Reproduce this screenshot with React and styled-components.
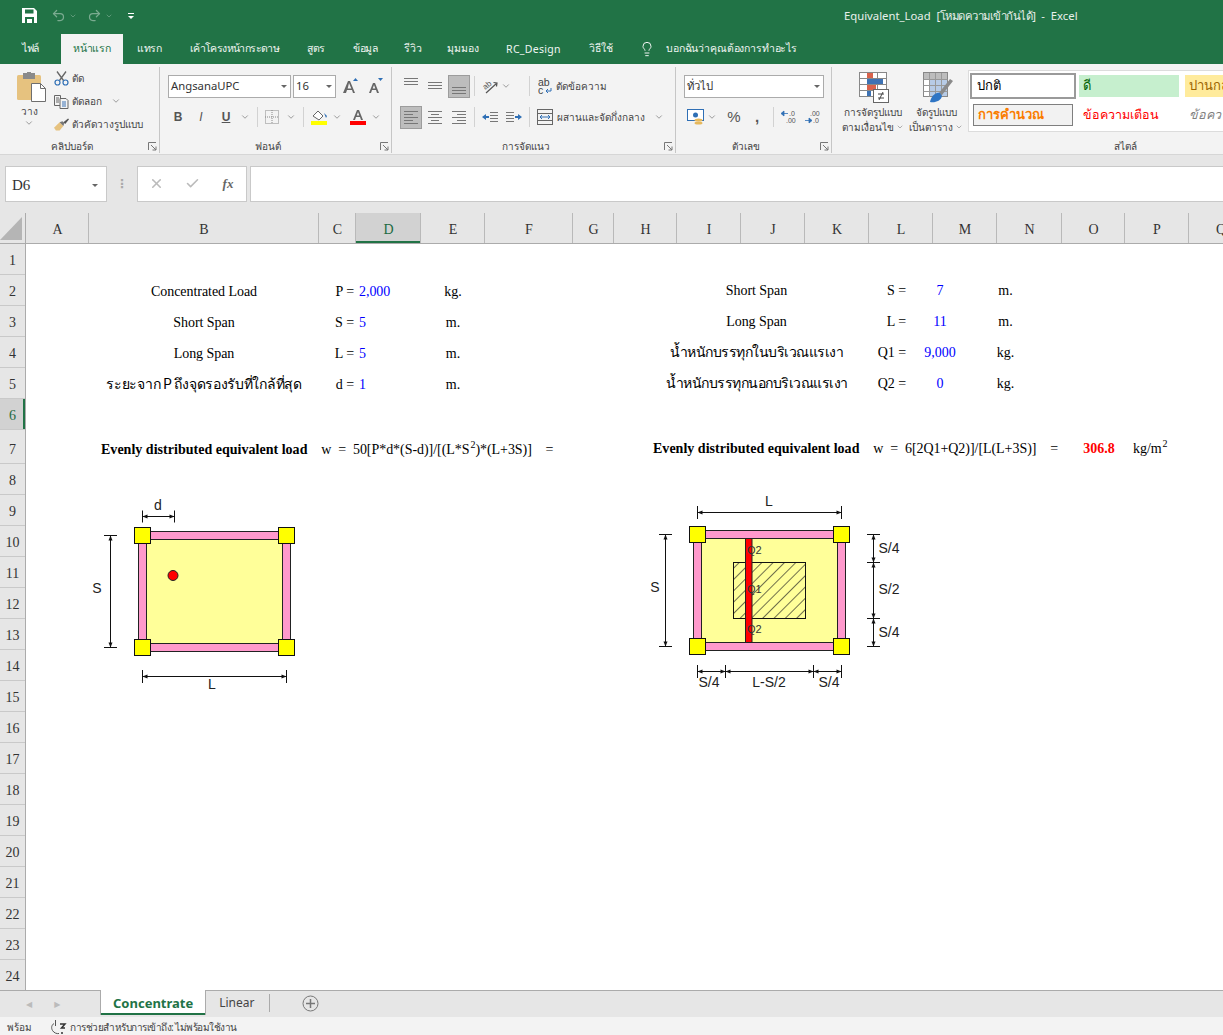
import React from "react";
import styled, { createGlobalStyle } from "styled-components";
import { Undo2, Redo2, Lightbulb, ChevronDown, X, Check } from "lucide-react";

const THAI = `"Noto Sans CJK SC", "Noto Sans", "Liberation Sans", "DejaVu Sans", sans-serif`;
const UI = `"Noto Sans", "Liberation Sans", "DejaVu Sans", sans-serif`;
const SERIF = `"Liberation Serif", "DejaVu Serif", serif`;

const GlobalStyle = createGlobalStyle`
  html, body {
    margin: 0;
    padding: 0;
    background: #fff;
  }
  * { box-sizing: border-box; }
`;

const Page = styled.div`
  width: 1223px;
  height: 1035px;
  overflow: hidden;
  display: flex;
  flex-direction: column;
  font-family: ${UI};
  color: #444;
`;

/* title + tabs */
const TitleBar = styled.div`
  height: 34px;
  background: #217346;
  display: flex;
  align-items: center;
  color: #fff;
  padding: 0 0 2px 22px;
`;

const QuickIcons = styled.div`
  display: flex;
  align-items: center;
  width: 822px;
`;

const QuickBtn = styled.span`
  display: inline-flex;
  align-items: center;
  margin-right: ${({ $gap }) => $gap || 0}px;
  opacity: ${({ $dim }) => ($dim ? 0.4 : 1)};
`;

const TitleText = styled.div`
  font-size: 11.3px;
  white-space: pre;
  color: #e8f0eb;
`;

const TitleThai = styled.span`
  letter-spacing: -0.5px;
`;

const TabBar = styled.div`
  height: 30px;
  background: #217346;
  display: flex;
  align-items: stretch;
`;

const TabItem = styled.div`
  width: ${({ $w }) => ($w ? `${$w}px` : "auto")};
  flex: none;
  display: flex;
  align-items: center;
  justify-content: center;
  font-size: 10.5px;
  letter-spacing: ${({ $ls }) => $ls ?? -0.15}px;
  white-space: nowrap;
  color: ${({ $on }) => ($on ? "#217346" : "#f0f5f2")};
  background: ${({ $on }) => ($on ? "#f3f3f3" : "transparent")};
`;

const Ribbon = styled.div`
  height: 91px;
  background: #f3f3f3;
  display: flex;
  border-bottom: 1px solid #d6d6d6;
`;

const Group = styled.div`
  width: ${({ $w }) => $w}px;
  flex: none;
  position: relative;
  height: 86px;
  margin-top: 3px;
  display: flex;
  flex-direction: column;
  border-right: 1px solid #c6c6c6;
  &:last-child { border-right: 0; }
`;

const GroupBody = styled.div`
  flex: 1;
  display: flex;
  flex-direction: ${({ $row }) => ($row ? "row" : "column")};
  padding: ${({ $pad }) => $pad || "8px 0 0 8px"};
  min-height: 0;
`;

const GroupLabel = styled.div`
  height: 14px;
  flex: none;
  padding: ${({ $pad }) => $pad || "0 16px 0 0"};
  text-align: center;
  font-size: 10px;
  line-height: 14px;
  color: #444;
`;

const Launcher = styled.svg`
  position: absolute;
  right: 2px;
  bottom: 2px;
`;

const ToolRow = styled.div`
  display: flex;
  align-items: center;
  height: ${({ $h }) => $h || 23}px;
  margin-top: ${({ $mt }) => $mt || 0}px;
  font-size: 10px;
  line-height: 14px;
  color: #444;
  white-space: nowrap;
`;

const IconBtn = styled.div`
  width: ${({ $w }) => $w}px;
  height: 23px;
  flex: none;
  display: flex;
  align-items: center;
  justify-content: center;
  margin-left: ${({ $ml }) => $ml || 0}px;
  background: ${({ $on }) => ($on ? "#bdbdbd" : "transparent")};
  border: ${({ $on }) => ($on ? "1px solid #9c9c9c" : "0")};
`;

const RowLabel = styled.span`
  margin-left: ${({ $ml }) => $ml || 0}px;
`;

const Combo = styled.div`
  width: ${({ $w }) => $w}px;
  height: 23px;
  flex: none;
  margin-right: ${({ $mr }) => $mr || 0}px;
  background: #fff;
  border: 1px solid #ababab;
  display: flex;
  align-items: center;
  padding: 0 3px 0 2px;
  font-size: 11.3px;
  color: #333;
  justify-content: space-between;
`;

const Caret = styled.span`
  width: 0;
  height: 0;
  border-left: 3px solid transparent;
  border-right: 3px solid transparent;
  border-top: 3px solid #666;
`;

const Sep = styled.div`
  width: 1px;
  height: 20px;
  flex: none;
  margin-left: ${({ $ml }) => $ml || 0}px;
  margin-right: ${({ $mr }) => $mr || 0}px;
  background: #d2d2d2;
`;

const FontBtn = styled.span`
  font-family: "Liberation Sans", sans-serif;
  font-size: ${({ $fs }) => $fs || 12}px;
  font-weight: ${({ $b }) => ($b ? 700 : 400)};
  font-style: ${({ $i }) => ($i ? "italic" : "normal")};
  text-decoration: ${({ $u }) => ($u ? "underline" : "none")};
  color: #555;
`;

const PasteColumn = styled.div`
  width: 54px;
  flex: none;
  padding: 5px 0 0 4px;
  display: flex;
  flex-direction: column;
  align-items: center;
  font-size: 10px;
  line-height: 14px;
  color: #444;
`;

const Glyph = styled.div`
  display: flex;
  margin-left: ${({ $ml }) => $ml || 0}px;
`;

const PasteLabel = styled.div`
  margin-top: 2px;
`;

const ClipStack = styled.div`
  display: flex;
  flex-direction: column;
`;

const StyleCommand = styled.div`
  width: ${({ $w }) => $w}px;
  flex: none;
  padding-top: 5px;
  display: flex;
  flex-direction: column;
  align-items: center;
  font-size: 10px;
  line-height: 15px;
  color: #444;
  white-space: nowrap;
`;

const CommandText = styled.div`
  margin-top: ${({ $mt }) => $mt || 0}px;
  display: flex;
  align-items: center;
  gap: 2px;
`;

const StyleGallery = styled.div`
  flex: 1;
  margin: 3px 0 0 2px;
  height: 62px;
  background: #fff;
  border: 1px solid #dcdcdc;
  border-right: 0;
  overflow: hidden;
  display: grid;
  grid-template-columns: 108px 106px 106px;
  grid-template-rows: 26px 22px;
  row-gap: 5px;
  padding-top: 2px;
`;

const StyleChip = styled.div`
  margin-left: ${({ $ml }) => $ml || 2}px;
  width: ${({ $w }) => $w}px;
  height: ${({ $h }) => $h}px;
  align-self: center;
  background: ${({ $bg }) => $bg || "transparent"};
  border: ${({ $bd }) => $bd || "0"};
  color: ${({ $c }) => $c};
  font-size: ${({ $fs }) => $fs || 13}px;
  font-weight: ${({ $b }) => ($b ? 700 : 400)};
  font-style: ${({ $i }) => ($i ? "italic" : "normal")};
  display: flex;
  align-items: center;
  padding-left: ${({ $pl }) => $pl || 4}px;
  white-space: nowrap;
  overflow: hidden;
`;

/* formula bar */
const FormulaBand = styled.div`
  height: 58px;
  background: #e6e6e6;
  display: flex;
  align-items: flex-start;
  padding: 11px 0 0 5px;
`;

const NameBox = styled.div`
  width: 102px;
  height: 36px;
  background: #fff;
  border: 1px solid #c9c9c9;
  display: flex;
  align-items: center;
  justify-content: space-between;
  padding: 3px 8px 0 6px;
  font-family: ${SERIF};
  font-size: 15px;
  color: #333;
`;

const Dots = styled.div`
  width: 30px;
  height: 36px;
  display: flex;
  align-items: center;
  justify-content: center;
  color: #aaa;
  font-size: 12px;
  font-weight: 700;
`;

const FxBox = styled.div`
  width: 110px;
  height: 36px;
  background: #fff;
  border: 1px solid #c9c9c9;
  display: grid;
  grid-template-columns: repeat(3, 36px);
  place-items: center;
  margin-right: 3px;
`;

const Fx = styled.span`
  font-family: ${SERIF};
  font-style: italic;
  font-weight: 700;
  font-size: 13px;
  color: #666;
`;

const FormulaInput = styled.div`
  flex: 1;
  height: 36px;
  background: #fff;
  border: 1px solid #c9c9c9;
  border-right: 0;
`;

/* sheet */
const COLS = [
  ["A", 63], ["B", 230], ["C", 37], ["D", 65], ["E", 64], ["F", 88], ["G", 41], ["H", 63],
  ["I", 64], ["J", 64], ["K", 64], ["L", 64], ["M", 64], ["N", 65], ["O", 63], ["P", 64], ["Q", 64],
];
const TEMPLATE = COLS.map(([, w]) => `${w}px`).join(" ");
const ROWS = Array.from({ length: 24 }, (_, i) => i + 1);
const rowHeight = (n) => (n === 7 ? 34 : 31);

const HeaderRow = styled.div`
  height: 31px;
  display: flex;
  background: #e6e6e6;
  border-bottom: 1px solid #ababab;
`;

const Corner = styled.div`
  width: 26px;
  height: 30px;
  flex: none;
  position: relative;
  border-right: 1px solid #ababab;
  &::after {
    content: "";
    position: absolute;
    left: 0;
    bottom: 3px;
    border-style: solid;
    border-width: 0 0 23px 22px;
    border-color: transparent transparent #b5b5b5 transparent;
  }
`;

const ColHead = styled.div`
  flex: none;
  height: 30px;
  width: ${({ $w }) => $w}px;
  display: flex;
  align-items: center;
  justify-content: center;
  padding: 4px 0 0 1px;
  font-family: ${SERIF};
  font-size: 14px;
  color: ${({ $on }) => ($on ? "#1e6b42" : "#333")};
  background: ${({ $on }) => ($on ? "#d2d2d2" : "transparent")};
  border-right: 1px solid #b9b9b9;
  box-shadow: ${({ $on }) => ($on ? "inset 0 -2px 0 #217346" : "none")};
`;

const SheetArea = styled.div`
  height: 747px;
  display: flex;
  position: relative;
  overflow: hidden;
  background: #fff;
`;

const RowHeads = styled.div`
  width: 26px;
  flex: none;
  background: #e6e6e6;
  border-right: 1px solid #ababab;
`;

const RowHead = styled.div`
  height: ${({ $h }) => $h}px;
  display: flex;
  align-items: flex-end;
  justify-content: center;
  padding-bottom: 5px;
  line-height: 16px;
  font-family: ${SERIF};
  font-size: 14px;
  color: ${({ $on }) => ($on ? "#1e6b42" : "#333")};
  background: ${({ $on }) => ($on ? "#d2d2d2" : "transparent")};
  border-bottom: 1px solid #c9c9c9;
  box-shadow: ${({ $on }) => ($on ? "inset -2px 0 0 #217346" : "none")};
`;

const Cells = styled.div`
  display: grid;
  grid-template-columns: ${TEMPLATE};
  grid-template-rows: ${ROWS.map((n) => `${rowHeight(n)}px`).join(" ")};
  font-family: ${SERIF};
  font-size: 14px;
  line-height: 16px;
  letter-spacing: -0.05px;
  color: #000;
`;

const Cell = styled.div`
  grid-column: ${({ $col }) => $col} / span ${({ $span }) => $span || 1};
  grid-row: ${({ $row }) => $row};
  display: flex;
  align-items: flex-end;
  justify-content: ${({ $al }) => $al || "center"};
  padding-left: ${({ $pl }) => $pl || 0}px;
  padding-right: ${({ $pr }) => $pr || 0}px;
  padding-bottom: ${({ $lift }) => 6 + ($lift || 0)}px;
  white-space: pre;
  color: ${({ $c }) => $c || "#000"};
  font-weight: ${({ $b }) => ($b ? 700 : 400)};
`;

const ThaiText = styled.span`
  display: block;
  font-family: ${THAI};
  font-size: 14px;
  letter-spacing: ${({ $right }) => ($right ? -0.5 : -0.3)}px;
  margin-bottom: 2px;
`;

const BoldLabel = styled.b`
  letter-spacing: 0.02px;
`;

const Sup = styled.sup`
  font-size: 10px;
  line-height: 0;
  vertical-align: 6px;
  margin-left: 1px;
`;

const DiagramSvg = styled.svg`
  position: absolute;
  left: ${({ $x }) => $x}px;
  top: ${({ $y }) => $y}px;
  font-family: "Liberation Sans", sans-serif;
`;

/* bottom */
const SheetTabs = styled.div`
  height: 27px;
  background: #e6e6e6;
  border-top: 1px solid #ababab;
  display: flex;
  align-items: flex-start;
`;

const NavArrows = styled.div`
  width: 100px;
  height: 24px;
  display: flex;
  align-items: center;
  gap: 22px;
  padding-left: 26px;
  color: #bbb;
  font-size: 8px;
`;

const SheetTab = styled.div`
  height: 25px;
  margin-top: -1px;
  padding: 0 ${({ $on }) => ($on ? 12 : 13)}px;
  display: flex;
  align-items: center;
  font-size: ${({ $on }) => ($on ? 13 : 12)}px;
  background: ${({ $on }) => ($on ? "#fff" : "transparent")};
  color: ${({ $on }) => ($on ? "#217346" : "#444")};
  font-weight: ${({ $on }) => ($on ? 700 : 400)};
  border-left: ${({ $on }) => ($on ? "1px solid #ababab" : "0")};
  border-right: ${({ $on }) => ($on ? "1px solid #ababab" : "0")};
  box-shadow: ${({ $on }) => ($on ? "inset 0 -2px 0 #217346" : "none")};
`;

const TabSep = styled.div`
  width: 1px;
  height: 18px;
  margin: 3px 32px 0 1px;
  background: #aaa;
`;

const AddSheet = styled.svg`
  margin-top: 4px;
`;

const StatusBar = styled.div`
  height: 18px;
  background: #f3f3f3;
  display: flex;
  align-items: center;
  padding: 3px 0 0 7px;
  font-size: 10px;
  color: #444;
`;

const StatusItem = styled.span`
  display: inline-flex;
  align-items: center;
  gap: 3px;
  margin-left: ${({ $ml }) => $ml || 0}px;
  letter-spacing: ${({ $tight }) => ($tight ? "-0.5px" : "0")};
`;

/* drawings */
const SaveIcon = () => (
  <svg width="15" height="15" viewBox="0 0 15 15">
    <path d="M0 0h12l3 3v12H0z" fill="#fff" />
    <rect x="3" y="1.500" width="8.500" height="4" fill="#217346" />
    <rect x="3" y="9" width="9" height="6" fill="#217346" />
    <rect x="5" y="11" width="5" height="4" fill="#fff" />
  </svg>
);

const Customize = () => (
  <svg width="8" height="8" viewBox="0 0 8 8">
    <rect x="1" y="1" width="6" height="1" fill="#fff" />
    <path d="M1 4h6L4 7z" fill="#fff" />
  </svg>
);

const PasteIcon = () => (
  <svg width="29" height="30" viewBox="0 0 29 30">
    <rect x="0" y="3" width="24" height="25" rx="1.500" fill="#e6c27f" />
    <rect x="6" y="1" width="12" height="6" fill="#8a8a8a" />
    <rect x="10" y="0" width="4" height="3" fill="#8a8a8a" />
    <path d="M14.500 11.500h9l5 5v13h-14z" fill="#fff" stroke="#6e6e6e" />
    <path d="M23.500 11.500v5h5" fill="none" stroke="#6e6e6e" />
  </svg>
);

const CutIcon = () => (
  <svg width="15" height="15" viewBox="0 0 15 15" fill="none">
    <path d="M3 0.500 9.500 9.500M12 0.500 5.500 9.500" stroke="#666" strokeWidth="1.300" />
    <circle cx="3.500" cy="11.500" r="2.500" stroke="#2f6fb5" strokeWidth="1.200" />
    <circle cx="11.500" cy="11.500" r="2.500" stroke="#2f6fb5" strokeWidth="1.200" />
  </svg>
);

const CopyIcon = () => (
  <svg width="15" height="15" viewBox="0 0 15 15" fill="none" stroke="#666">
    <path d="M.5 1.500h6v10h-6zM2 4h3M2 6h3M2 8h3" />
    <path d="M6 4.500h6l2 2v8H6z" fill="#f3f3f3" />
    <path d="M8 8h4M8 10h4M8 12h4" stroke="#3d72b4" />
  </svg>
);

const BrushIcon = () => (
  <svg width="16" height="14" viewBox="0 0 16 14">
    <path d="M0 11 6 5l4 4-4 5H2z" fill="#e6c27f" />
    <path d="m6 5 3-1 2 2-1 3z" fill="#777" />
    <path d="m10 5 5-4 1 1-4 5z" fill="#555" />
  </svg>
);

const VAlignIcon = ({ top }) => (
  <svg width="14" height="23" viewBox="0 0 14 23" fill="#777">
    {[0, 3, 6].map((d) => (
      <rect key={d} x="0" y={top + d} width="14" height="1" />
    ))}
  </svg>
);

const HAlignIcon = ({ rows }) => (
  <svg width="14" height="14" viewBox="0 0 14 14" fill="#777">
    {rows.map(([x, w], i) => (
      <rect key={i} x={x} y={1 + i * 3} width={w} height="1" />
    ))}
  </svg>
);

const AL_LEFT = [[0, 14], [0, 9], [0, 14], [0, 9], [0, 14]];
const AL_CENTER = [[0, 14], [3, 8], [0, 14], [3, 8], [0, 14]];
const AL_RIGHT = [[0, 14], [5, 9], [0, 14], [5, 9], [0, 14]];

const Launch = () => (
  <Launcher width="9" height="9" viewBox="0 0 9 9" fill="none" stroke="#777">
    <path d="M.5 8V.5H8M3 3l5 5M4.500 8H8V4.500" />
  </Launcher>
);

const IndentIcon = ({ flip }) => (
  <svg width="16" height="12" viewBox="0 0 16 12">
    <g transform={flip ? "translate(16 0) scale(-1 1)" : undefined}>
      <path d="M0 6 4 3v2h3v2H4v2z" fill="#2f6fb5" />
      <path d="M8 1.500h8M8 4.500h8M8 7.500h8M8 10.500h8" stroke="#777" />
    </g>
  </svg>
);

const WrapIcon = () => (
  <svg width="15" height="19" viewBox="0 0 15 19">
    <text x="0" y="9" fontSize="10.500" fontFamily="Liberation Sans" fill="#444">ab</text>
    <text x="0" y="17" fontSize="10.500" fontFamily="Liberation Sans" fill="#444">c</text>
    <path d="M13 11v3H8M10 12l-2 2 2 2" fill="none" stroke="#2f6fb5" />
  </svg>
);

const MergeIcon = () => (
  <svg width="16" height="16" viewBox="0 0 16 16" fill="none">
    <rect x=".5" y=".5" width="15" height="15" stroke="#666" />
    <path d="M.5 4.500h15M.5 11.500h15" stroke="#666" />
    <path d="M3 8h10" stroke="#2f6fb5" />
    <path d="M5 6 3 8l2 2M11 6l2 2-2 2" stroke="#2f6fb5" />
  </svg>
);

const OrientIcon = () => (
  <svg width="18" height="18" viewBox="0 0 18 18" fill="none">
    <text x="2" y="11" fontSize="8" fontFamily="Liberation Sans" fill="#555" transform="rotate(-40 6 9)">ab</text>
    <path d="M5 16 16 6M12.500 5.500l3.500.5-.5 3.500" stroke="#555" strokeWidth="1.200" />
  </svg>
);

const AccountingIcon = () => (
  <svg width="17" height="17" viewBox="0 0 17 17">
    <rect x=".5" y=".5" width="16" height="11" fill="#fff" stroke="#2f6fb5" />
    <circle cx="8.500" cy="6" r="2.500" fill="#2f6fb5" />
    <ellipse cx="11.500" cy="11" rx="4" ry="1.600" fill="#e6b85c" />
    <ellipse cx="11.500" cy="14" rx="4" ry="1.600" fill="#e6b85c" />
  </svg>
);

const DecIcon = ({ up }) => (
  <svg width="16" height="16" viewBox="0 0 16 16">
    <text x={up ? 8 : 5} y="7" fontSize="7" fontFamily="Liberation Sans" fill="#555">{up ? ".0" : ".00"}</text>
    <text x={up ? 5 : 8} y="14" fontSize="7" fontFamily="Liberation Sans" fill="#555">{up ? ".00" : ".0"}</text>
    {up ? <path d="M0 4.500 3 2v5zM3 4.500h4" fill="#2f6fb5" stroke="#2f6fb5" strokeWidth=".8" /> : <path d="M7 11.500 4 9v5zM0 11.500h4" fill="#2f6fb5" stroke="#2f6fb5" strokeWidth=".8" />}
  </svg>
);

const BorderIcon = () => (
  <svg width="14" height="14" viewBox="0 0 14 14" fill="none" stroke="#888" strokeDasharray="1 1">
    <rect x=".5" y=".5" width="13" height="13" />
    <path d="M7 0v14M0 7h14" />
  </svg>
);

const FillIcon = () => (
  <svg width="17" height="16" viewBox="0 0 17 16">
    <path d="m2 7 5-5 5 5-4 4z" fill="#fff" stroke="#666" />
    <path d="M13 4l3 3-1 2z" fill="#2f6fb5" />
    <rect x="0" y="12" width="16" height="4" fill="#ffff00" />
  </svg>
);

const ColorA = () => (
  <svg width="16" height="16" viewBox="0 0 16 16">
    <path d="M3 11 7 1h2l4 10h-2l-1-3H6l-1 3zM6.700 6.500h2.600L8 3z" fill="#666" />
    <rect x="0" y="12" width="16" height="4" fill="#ff0000" />
  </svg>
);

const SizeA = ({ up }) => (
  <svg width="15" height="16" viewBox="0 0 15 16">
    <path d={up ? "M0 15 5 3h2l5 12h-2l-1-3H4l-1 3zM4.700 10.500h3.600L6 5z" : "M1 15 5 5h2l4 10H9l-1-3H4l-1 3zM4.700 10.500h2.600L6 7z"} fill="#666" />
    <path d={up ? "M10 3l2.500-3L15 3z" : "M10 0h5l-2.500 3z"} fill="#2f6fb5" />
  </svg>
);

const CondIcon = () => (
  <svg width="30" height="31" viewBox="0 0 30 31">
    <g fill="none" stroke="#888">
      <rect x=".5" y=".5" width="27" height="24" fill="#fff" />
      <path d="M.5 6.500h27M.5 12.500h27M.5 18.500h27M9.500 0v25M18.500 0v25" />
    </g>
    <rect x="8" y="1" width="6" height="5" fill="#d9634c" />
    <rect x="8" y="7" width="16" height="5" fill="#3d72b4" />
    <rect x="8" y="13" width="9" height="5" fill="#d9634c" />
    <rect x="8" y="19" width="4" height="5" fill="#3d72b4" />
    <rect x="14.500" y="17.500" width="15" height="13" fill="#fff" stroke="#666" />
    <path d="M19 22h6M19 26h6M24 20l-4 8" stroke="#444" fill="none" />
  </svg>
);

const TableIcon = () => (
  <svg width="30" height="31" viewBox="0 0 30 31">
    <rect x=".5" y=".5" width="24" height="24" fill="#fff" stroke="#888" />
    <rect x="1" y="1" width="23" height="6" fill="#bdbdbd" />
    <rect x="7" y="7" width="17" height="17" fill="#b7cbe6" />
    <path d="M.5 7.500h24M.5 13.500h24M.5 19.500h24M6.500 1v24M12.500 1v24M18.500 1v24" stroke="#999" fill="none" />
    <path d="m16 21 11-14 3 2-11 14z" fill="#8a8a8a" />
    <path d="M7 30c1-5 5-10 10-9l2 3c-1 5-7 7-12 6z" fill="#2f75c4" />
  </svg>
);

const AccessIcon = () => (
  <svg width="17" height="15" viewBox="0 0 17 15" fill="none" stroke="#555">
    <path d="M4 3.500C1.500 5 1 8 2.500 10.500S7 14 9 13.500" />
    <path d="M5.500 0v6" />
    <path d="M10 4h5l-3.500 4H15M11 13h2" stroke="#333" strokeWidth="1.500" />
  </svg>
);

const Dim = ({ x1, y1, x2, y2, tick = 6.500 }) => {
  const vertical = x1 === x2;
  return (
    <g stroke="#111" fill="#111">
      <line x1={x1} y1={y1} x2={x2} y2={y2} />
      {vertical ? (
        <>
          <line x1={x1 - tick} y1={y1} x2={x1 + tick} y2={y1} />
          <line x1={x1 - tick} y1={y2} x2={x1 + tick} y2={y2} />
          <path d={`M${x1 - 2} ${y1 + 5}L${x1} ${y1}L${x1 + 2} ${y1 + 5}z`} stroke="none" />
          <path d={`M${x1 - 2} ${y2 - 5}L${x1} ${y2}L${x1 + 2} ${y2 - 5}z`} stroke="none" />
        </>
      ) : (
        <>
          <line x1={x1} y1={y1 - tick} x2={x1} y2={y1 + tick} />
          <line x1={x2} y1={y1 - tick} x2={x2} y2={y1 + tick} />
          <path d={`M${x1 + 5} ${y1 - 2}L${x1} ${y1}L${x1 + 5} ${y1 + 2}z`} stroke="none" />
          <path d={`M${x2 - 5} ${y1 - 2}L${x2} ${y1}L${x2 - 5} ${y1 + 2}z`} stroke="none" />
        </>
      )}
    </g>
  );
};

const Frame = ({ x, y }) => {
  const W = 144;
  const H = 112;
  const corners = [[x, y], [x + W, y], [x, y + H], [x + W, y + H]];
  return (
    <g>
      <rect x={x + 4} y={y + 4} width={W - 8} height={H - 8} fill="#ffff99" />
      <rect x={x - 4} y={y - 4} width={8} height={H + 8} fill="#ff99cc" stroke="#222" />
      <rect x={x + W - 4} y={y - 4} width={8} height={H + 8} fill="#ff99cc" stroke="#222" />
      <rect x={x} y={y - 4} width={W} height={8} fill="#ff99cc" stroke="#222" />
      <rect x={x} y={y + H - 4} width={W} height={8} fill="#ff99cc" stroke="#222" />
      {corners.map(([cx, cy], i) => (
        <rect key={i} x={cx - 8} y={cy - 8} width={16} height={16} fill="#ffff00" stroke="#111" />
      ))}
    </g>
  );
};

// left picture: page coords minus (80, 490)
const PointLoadDiagram = () => (
  <DiagramSvg $x={80} $y={246} width="240" height="210" viewBox="80 490 240 210">
    <Frame x={142.500} y={535.500} />
    <circle cx="173" cy="575.500" r="5" fill="#ff0000" stroke="#222" />
    <Dim x1={142.500} y1={516.500} x2={174.500} y2={516.500} tick={6} />
    <Dim x1={110.500} y1={535.500} x2={110.500} y2={647.500} />
    <Dim x1={142.500} y1={676.500} x2={286.500} y2={676.500} />
    <g fontSize="14" fill="#222" textAnchor="middle">
      <text x="158" y="510">d</text>
      <text x="97" y="593">S</text>
      <text x="212" y="689">L</text>
    </g>
  </DiagramSvg>
);

const LinearLoadDiagram = () => (
  <DiagramSvg $x={640} $y={246} width="280" height="210" viewBox="640 490 280 210">
    <defs>
      <pattern id="hatch" width="8" height="8" patternUnits="userSpaceOnUse" patternTransform="rotate(45)">
        <line x1="0" y1="0" x2="0" y2="8" stroke="#222" strokeWidth="1.300" />
      </pattern>
    </defs>
    <Frame x={697.500} y={534.500} />
    <rect x="733.500" y="562.500" width="72" height="56" fill="url(#hatch)" stroke="#111" />
    <rect x="745.500" y="538.500" width="6.500" height="104" fill="#ff0000" stroke="#222" />
    <Dim x1={697.500} y1={512.500} x2={841.500} y2={512.500} />
    <Dim x1={665.500} y1={534.500} x2={665.500} y2={646.500} />
    <Dim x1={873.500} y1={534.500} x2={873.500} y2={562.500} />
    <Dim x1={873.500} y1={562.500} x2={873.500} y2={618.500} />
    <Dim x1={873.500} y1={618.500} x2={873.500} y2={646.500} />
    <Dim x1={697.500} y1={671.500} x2={725.500} y2={671.500} />
    <Dim x1={725.500} y1={671.500} x2={813.500} y2={671.500} />
    <Dim x1={813.500} y1={671.500} x2={841.500} y2={671.500} />
    <g fontSize="14" fill="#222" textAnchor="middle">
      <text x="769" y="506">L</text>
      <text x="655" y="592">S</text>
      <text x="889" y="553">S/4</text>
      <text x="889" y="594">S/2</text>
      <text x="889" y="637">S/4</text>
      <text x="709" y="687">S/4</text>
      <text x="769" y="687">L-S/2</text>
      <text x="829" y="687">S/4</text>
    </g>
    <g fontSize="11" fill="#333">
      <text x="747" y="554">Q2</text>
      <text x="747" y="593">Q1</text>
      <text x="747" y="633">Q2</text>
    </g>
  </DiagramSvg>
);

const Chev = ({ size = 10 }) => <ChevronDown size={size} strokeWidth={1.500} color="#666" />;

const RIBBON_TABS = [
  ["แทรก", 53], ["เค้าโครงหน้ากระดาษ", 117, -0.6], ["สูตร", 46], ["ข้อมูล", 53], ["รีวิว", 42],
  ["มุมมอง", 58], ["RC_Design", 83, 0.3], ["วิธีใช้", 52],
];

const BLUE = "#0000ff";

const LEFT_ROWS = [
  ["Concentrated Load", "P =", "2,000", "kg."],
  ["Short Span", "S =", "5", "m."],
  ["Long Span", "L =", "5", "m."],
  [<ThaiText>ระยะจาก P ถึงจุดรองรับที่ใกล้ที่สุด</ThaiText>, "d =", "1", "m."],
];

const RIGHT_ROWS = [
  ["Short Span", "S =", "7", "m."],
  ["Long Span", "L =", "11", "m."],
  [<ThaiText $right>น้ำหนักบรรทุกในบริเวณแรเงา</ThaiText>, "Q1 =", "9,000", "kg."],
  [<ThaiText $right>น้ำหนักบรรทุกนอกบริเวณแรเงา</ThaiText>, "Q2 =", "0", "kg."],
];

const App = () => (
  <Page>
    <GlobalStyle />
    <TitleBar>
      <QuickIcons>
        <QuickBtn $gap={14}><SaveIcon /></QuickBtn>
        <QuickBtn $dim $gap={3}><Undo2 size={15} /></QuickBtn>
        <QuickBtn $dim $gap={10}><ChevronDown size={8} /></QuickBtn>
        <QuickBtn $dim $gap={3}><Redo2 size={15} /></QuickBtn>
        <QuickBtn $dim $gap={14}><ChevronDown size={8} /></QuickBtn>
        <QuickBtn><Customize /></QuickBtn>
      </QuickIcons>
      <TitleText>Equivalent_Load  <TitleThai>[โหมดความเข้ากันได้]</TitleThai>  -  Excel</TitleText>
    </TitleBar>

    <TabBar>
      <TabItem $w={61}>ไฟล์</TabItem>
      <TabItem $w={62} $on>หน้าแรก</TabItem>
      {RIBBON_TABS.map(([label, w, ls]) => (
        <TabItem key={label} $w={w} $ls={ls}>{label}</TabItem>
      ))}
      <TabItem $w={39}><Lightbulb size={16} strokeWidth={1.500} /></TabItem>
      <TabItem>บอกฉันว่าคุณต้องการทำอะไร</TabItem>
    </TabBar>

    <Ribbon>
      <Group $w={160}>
        <GroupBody $row $pad="0">
          <PasteColumn>
            <Glyph $ml={4}><PasteIcon /></Glyph>
            <PasteLabel>วาง</PasteLabel>
            <Chev />
          </PasteColumn>
          <ClipStack>
            <ToolRow><IconBtn $w={15}><CutIcon /></IconBtn><RowLabel $ml={3}>ตัด</RowLabel></ToolRow>
            <ToolRow><IconBtn $w={15}><CopyIcon /></IconBtn><RowLabel $ml={3}>ตัดลอก</RowLabel><IconBtn $w={10} $ml={9}><Chev /></IconBtn></ToolRow>
            <ToolRow><IconBtn $w={15}><BrushIcon /></IconBtn><RowLabel $ml={3}>ตัวคัดวางรูปแบบ</RowLabel></ToolRow>
          </ClipStack>
        </GroupBody>
        <GroupLabel>คลิปบอร์ด</GroupLabel>
        <Launch />
      </Group>

      <Group $w={232}>
        <GroupBody>
          <ToolRow>
            <Combo $w={123} $mr={2}>AngsanaUPC<Caret /></Combo>
            <Combo $w={43}>16<Caret /></Combo>
            <IconBtn $w={28}><SizeA up /></IconBtn>
            <IconBtn $w={22}><SizeA /></IconBtn>
          </ToolRow>
          <ToolRow $mt={8}>
            <IconBtn $w={20}><FontBtn $b>B</FontBtn></IconBtn>
            <IconBtn $w={26}><FontBtn $i>I</FontBtn></IconBtn>
            <IconBtn $w={24}><FontBtn $b $u>U</FontBtn></IconBtn>
            <IconBtn $w={14}><Chev /></IconBtn>
            <Sep $ml={5} $mr={5} />
            <IconBtn $w={18}><BorderIcon /></IconBtn>
            <IconBtn $w={20}><Chev /></IconBtn>
            <Sep $ml={2} $mr={5} />
            <IconBtn $w={20}><FillIcon /></IconBtn>
            <IconBtn $w={16}><Chev /></IconBtn>
            <IconBtn $w={26}><ColorA /></IconBtn>
            <IconBtn $w={10}><Chev /></IconBtn>
          </ToolRow>
        </GroupBody>
        <GroupLabel>ฟอนต์</GroupLabel>
        <Launch />
      </Group>

      <Group $w={284}>
        <GroupBody>
          <ToolRow>
            <IconBtn $w={22}><VAlignIcon top={3} /></IconBtn>
            <IconBtn $w={22} $ml={2}><VAlignIcon top={7} /></IconBtn>
            <IconBtn $w={22} $ml={2} $on><VAlignIcon top={12} /></IconBtn>
            <Sep $ml={4} />
            <IconBtn $w={22} $ml={4}><OrientIcon /></IconBtn>
            <IconBtn $w={10}><Chev /></IconBtn>
            <Sep $ml={18} $mr={8} />
            <WrapIcon />
            <RowLabel $ml={3}>ตัดข้อความ</RowLabel>
          </ToolRow>
          <ToolRow $mt={8}>
            <IconBtn $w={22} $on><HAlignIcon rows={AL_LEFT} /></IconBtn>
            <IconBtn $w={22} $ml={2}><HAlignIcon rows={AL_CENTER} /></IconBtn>
            <IconBtn $w={22} $ml={2}><HAlignIcon rows={AL_RIGHT} /></IconBtn>
            <Sep $ml={4} />
            <IconBtn $w={22} $ml={4}><IndentIcon /></IconBtn>
            <IconBtn $w={22} $ml={2}><IndentIcon flip /></IconBtn>
            <Sep $ml={4} $mr={7} />
            <MergeIcon />
            <RowLabel $ml={4}>ผสานและจัดกึ่งกลาง</RowLabel>
            <IconBtn $w={10} $ml={9}><Chev /></IconBtn>
          </ToolRow>
        </GroupBody>
        <GroupLabel>การจัดแนว</GroupLabel>
        <Launch />
      </Group>

      <Group $w={156}>
        <GroupBody>
          <ToolRow><Combo $w={140}>ทั่วไป<Caret /></Combo></ToolRow>
          <ToolRow $mt={8}>
            <IconBtn $w={22}><AccountingIcon /></IconBtn>
            <IconBtn $w={12}><Chev /></IconBtn>
            <IconBtn $w={32}><FontBtn $fs={15}>%</FontBtn></IconBtn>
            <IconBtn $w={14}><FontBtn $fs={15} $b>,</FontBtn></IconBtn>
            <Sep $ml={9} $mr={7} />
            <DecIcon up />
            <IconBtn $w={16} $ml={8}><DecIcon /></IconBtn>
          </ToolRow>
        </GroupBody>
        <GroupLabel>ตัวเลข</GroupLabel>
        <Launch />
      </Group>

      <Group $w={391}>
        <GroupBody $row $pad="0 0 0 8px">
          <StyleCommand $w={66}>
            <Glyph $ml={2}><CondIcon /></Glyph>
            <CommandText $mt={2}>การจัดรูปแบบ</CommandText>
            <CommandText>ตามเงื่อนไข<Chev size={8} /></CommandText>
          </StyleCommand>
          <StyleCommand $w={60}>
            <Glyph $ml={4}><TableIcon /></Glyph>
            <CommandText $mt={2}>จัดรูปแบบ</CommandText>
            <CommandText>เป็นตาราง<Chev size={8} /></CommandText>
          </StyleCommand>
          <StyleGallery>
            <StyleChip $ml={1} $w={106} $h={26} $bg="#fff" $bd="2px solid #9a9a9a" $pl={5} $c="#000">ปกติ</StyleChip>
            <StyleChip $w={100} $h={22} $bg="#c6efce" $c="#006100">ดี</StyleChip>
            <StyleChip $w={100} $h={22} $bg="#ffeb9c" $c="#9c6500">ปานกลาง</StyleChip>
            <StyleChip $ml={4} $w={100} $h={22} $bg="#f2f2f2" $bd="1px solid #7f7f7f" $c="#fa7d00" $b>การคำนวณ</StyleChip>
            <StyleChip $w={100} $h={22} $fs={12.500} $c="#ff0000">ข้อความเตือน</StyleChip>
            <StyleChip $w={100} $h={22} $fs={12.500} $c="#7f7f7f" $i>ข้อความอธิบาย</StyleChip>
          </StyleGallery>
        </GroupBody>
        <GroupLabel $pad="0 0 0 196px">สไตล์</GroupLabel>
      </Group>
    </Ribbon>

    <FormulaBand>
      <NameBox>D6<Caret /></NameBox>
      <Dots>⋮</Dots>
      <FxBox>
        <X size={15} strokeWidth={2.500} color="#bbb" />
        <Check size={15} strokeWidth={2.500} color="#bbb" />
        <Fx>fx</Fx>
      </FxBox>
      <FormulaInput />
    </FormulaBand>

    <HeaderRow>
      <Corner />
      {COLS.map(([name, w]) => (
        <ColHead key={name} $w={w} $on={name === "D"}>{name}</ColHead>
      ))}
    </HeaderRow>

    <SheetArea>
      <RowHeads>
        {ROWS.map((n) => (
          <RowHead key={n} $h={rowHeight(n)} $on={n === 6}>{n}</RowHead>
        ))}
      </RowHeads>
      <Cells>
        {LEFT_ROWS.map(([label, sym, value, unit], i) => (
          <React.Fragment key={sym}>
            <Cell $col={2} $row={i + 2}>{label}</Cell>
            <Cell $col={3} $row={i + 2} $al="flex-end" $pr={2}>{sym}</Cell>
            <Cell $col={4} $row={i + 2} $al="flex-start" $pl={3} $c={BLUE}>{value}</Cell>
            <Cell $col={5} $row={i + 2}>{unit}</Cell>
          </React.Fragment>
        ))}
        <Cell $col={2} $span={5} $row={7} $al="flex-start" $pl={12}>
          <span><BoldLabel>Evenly distributed equivalent load</BoldLabel>{"    w  =  50[P*d*(S-d)]/[(L*S"}<Sup>2</Sup>{")*(L+3S)]    ="}</span>
        </Cell>

        {RIGHT_ROWS.map(([label, sym, value, unit], i) => (
          <React.Fragment key={sym}>
            <Cell $col={8} $span={4} $row={i + 2} $pl={30} $lift={1}>{label}</Cell>
            <Cell $col={12} $row={i + 2} $al="flex-end" $pr={27} $lift={1}>{sym}</Cell>
            <Cell $col={12} $span={2} $row={i + 2} $pl={14} $lift={1} $c={BLUE}>{value}</Cell>
            <Cell $col={13} $span={2} $row={i + 2} $pl={16} $lift={1}>{unit}</Cell>
          </React.Fragment>
        ))}
        <Cell $col={8} $span={7} $row={7} $al="flex-start" $pl={39} $lift={1}>
          <span><BoldLabel>Evenly distributed equivalent load</BoldLabel>{"    w  =  6[2Q1+Q2)]/[L(L+3S)]    ="}</span>
        </Cell>
        <Cell $col={15} $row={7} $pl={11} $lift={1} $b $c="#ff0000">306.8</Cell>
        <Cell $col={16} $row={7} $al="flex-start" $pl={8} $lift={1}>
          <span>kg/m<Sup>2</Sup></span>
        </Cell>
      </Cells>
      <PointLoadDiagram />
      <LinearLoadDiagram />
    </SheetArea>

    <SheetTabs>
      <NavArrows><span>◀</span><span>▶</span></NavArrows>
      <SheetTab $on>Concentrate</SheetTab>
      <SheetTab>Linear</SheetTab>
      <TabSep />
      <AddSheet width="17" height="17" viewBox="0 0 17 17" fill="none" stroke="#777">
        <circle cx="8.500" cy="8.500" r="7.500" />
        <path d="M8.500 4v9M4 8.500h9" strokeWidth="1.500" />
      </AddSheet>
    </SheetTabs>

    <StatusBar>
      <StatusItem>พร้อม</StatusItem>
      <StatusItem $ml={18} $tight><AccessIcon />การช่วยสำหรับการเข้าถึง: ไม่พร้อมใช้งาน</StatusItem>
    </StatusBar>
  </Page>
);

export default App;
